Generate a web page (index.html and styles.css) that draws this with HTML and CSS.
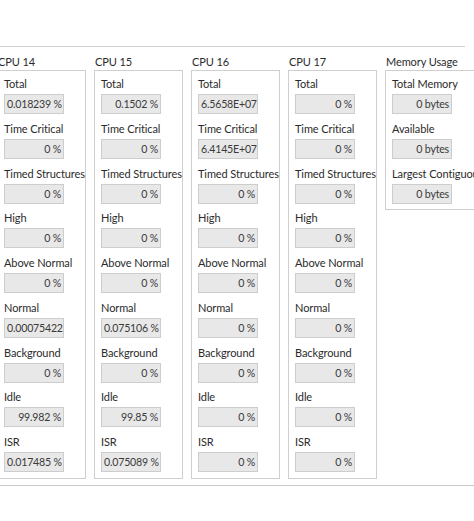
FILE: index.html
```html
<!DOCTYPE html>
<html>
<head>
<meta charset="utf-8">
<link rel="stylesheet" href="styles.css">
</head>
<body>
<div class="frame">
  <div class="columns">
    <section class="group">
      <div class="group-title">CPU 14</div>
      <div class="group-box">
        <div class="field"><div class="label">Total</div><div class="value">0.018239 %</div></div>
        <div class="field"><div class="label">Time Critical</div><div class="value">0 %</div></div>
        <div class="field"><div class="label">Timed Structures</div><div class="value">0 %</div></div>
        <div class="field"><div class="label">High</div><div class="value">0 %</div></div>
        <div class="field"><div class="label">Above Normal</div><div class="value">0 %</div></div>
        <div class="field"><div class="label">Normal</div><div class="value left">0.00075422 %</div></div>
        <div class="field"><div class="label">Background</div><div class="value">0 %</div></div>
        <div class="field"><div class="label">Idle</div><div class="value">99.982 %</div></div>
        <div class="field"><div class="label">ISR</div><div class="value">0.017485 %</div></div>
      </div>
    </section>
    <section class="group">
      <div class="group-title">CPU 15</div>
      <div class="group-box">
        <div class="field"><div class="label">Total</div><div class="value">0.1502 %</div></div>
        <div class="field"><div class="label">Time Critical</div><div class="value">0 %</div></div>
        <div class="field"><div class="label">Timed Structures</div><div class="value">0 %</div></div>
        <div class="field"><div class="label">High</div><div class="value">0 %</div></div>
        <div class="field"><div class="label">Above Normal</div><div class="value">0 %</div></div>
        <div class="field"><div class="label">Normal</div><div class="value">0.075106 %</div></div>
        <div class="field"><div class="label">Background</div><div class="value">0 %</div></div>
        <div class="field"><div class="label">Idle</div><div class="value">99.85 %</div></div>
        <div class="field"><div class="label">ISR</div><div class="value">0.075089 %</div></div>
      </div>
    </section>
    <section class="group">
      <div class="group-title">CPU 16</div>
      <div class="group-box">
        <div class="field"><div class="label">Total</div><div class="value">6.5658E+07</div></div>
        <div class="field"><div class="label">Time Critical</div><div class="value">6.4145E+07</div></div>
        <div class="field"><div class="label">Timed Structures</div><div class="value">0 %</div></div>
        <div class="field"><div class="label">High</div><div class="value">0 %</div></div>
        <div class="field"><div class="label">Above Normal</div><div class="value">0 %</div></div>
        <div class="field"><div class="label">Normal</div><div class="value">0 %</div></div>
        <div class="field"><div class="label">Background</div><div class="value">0 %</div></div>
        <div class="field"><div class="label">Idle</div><div class="value">0 %</div></div>
        <div class="field"><div class="label">ISR</div><div class="value">0 %</div></div>
      </div>
    </section>
    <section class="group">
      <div class="group-title">CPU 17</div>
      <div class="group-box">
        <div class="field"><div class="label">Total</div><div class="value">0 %</div></div>
        <div class="field"><div class="label">Time Critical</div><div class="value">0 %</div></div>
        <div class="field"><div class="label">Timed Structures</div><div class="value">0 %</div></div>
        <div class="field"><div class="label">High</div><div class="value">0 %</div></div>
        <div class="field"><div class="label">Above Normal</div><div class="value">0 %</div></div>
        <div class="field"><div class="label">Normal</div><div class="value">0 %</div></div>
        <div class="field"><div class="label">Background</div><div class="value">0 %</div></div>
        <div class="field"><div class="label">Idle</div><div class="value">0 %</div></div>
        <div class="field"><div class="label">ISR</div><div class="value">0 %</div></div>
      </div>
    </section>
    <section class="group memory">
      <div class="group-title">Memory Usage</div>
      <div class="group-box">
        <div class="field"><div class="label">Total Memory</div><div class="value">0 bytes</div></div>
        <div class="field"><div class="label">Available</div><div class="value">0 bytes</div></div>
        <div class="field"><div class="label">Largest Contiguous Block</div><div class="value">0 bytes</div></div>
      </div>
    </section>
  </div>
</div>
</body>
</html>
```
FILE: styles.css
```css
html, body {
  margin: 0;
  padding: 0;
  background: #ffffff;
  overflow: hidden;
}
body {
  width: 474px;
  height: 521px;
  font-family: Lato, "Noto Sans", sans-serif;
  font-size: 11px;
  letter-spacing: -0.1px;
  color: #2b2b2b;
}
.frame {
  margin-top: 46px;
  width: 474px;
  border-bottom: 1px solid #c9c9c9;
  padding-bottom: 6px;
  position: relative;
}
.frame::before {
  content: "";
  display: block;
  width: 465px;
  border-top: 1px solid #d2d2d2;
}
.columns {
  display: flex;
  align-items: flex-start;
  gap: 8px;
  margin-left: -3px;
}
.group {
  width: 89px;
  flex: none;
}
.group.memory {
  width: 110px;
}
.group-title {
  height: 15px;
  line-height: 15px;
  padding: 7px 0 1px 1px;
  white-space: nowrap;
}
.group-box {
  border: 1px solid #cfcfcf;
  padding: 0 6px 5.5px 6px;
  overflow: hidden;
}
.field + .field {
  margin-top: 1.75px;
}
.label {
  height: 15px;
  line-height: 15px;
  padding: 5px 0 3px 0;
  white-space: nowrap;
}
.value {
  width: 60px;
  height: 20px;
  box-sizing: border-box;
  border: 1px solid #cdcdcd;
  background: #e8e8e8;
  color: #3a3a3a;
  font-size: 10.6px;
  letter-spacing: -0.2px;
  text-align: right;
  line-height: 18px;
  padding: 0 2px;
  white-space: nowrap;
  overflow: hidden;
}
.value.left {
  text-align: left;
  text-overflow: clip;
}
```
